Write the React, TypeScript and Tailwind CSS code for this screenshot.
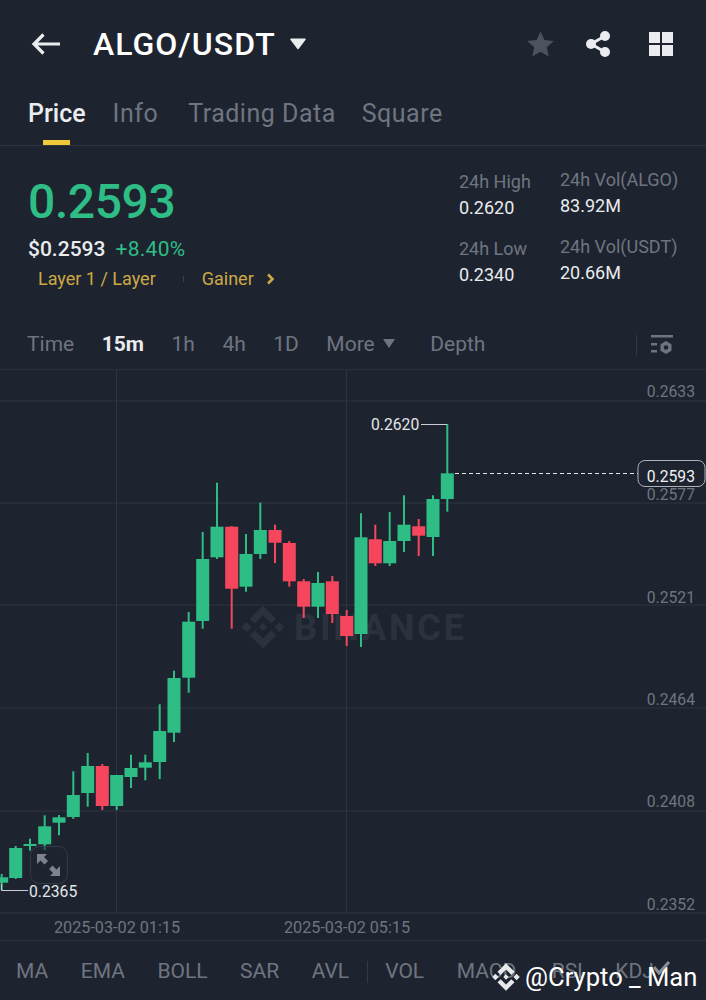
import { ReactNode } from "react";

// [x, wickTop, bodyTop, bodyBottom, wickBottom, red?]
const candles: [number, number, number, number, number, boolean][] = [
  [1.7, 874, 877.3, 882.7, 890, false],
  [15.7, 846, 848, 878, 879, false],
  [30, 838.7, 844, 846, 850.7, false],
  [44.7, 815.3, 826.3, 844.3, 850, false],
  [59, 815, 817.3, 822.7, 835.3, false],
  [73.3, 771.3, 795, 817, 819, false],
  [87.7, 753, 766, 793, 806.7, false],
  [102.3, 764, 766, 806, 810, true],
  [116.7, 775, 775, 806, 810, false],
  [131, 754.7, 768, 777, 788, false],
  [145.3, 754.7, 762.3, 767.7, 780.3, false],
  [159.7, 704.3, 731, 762, 779, false],
  [174, 670.7, 678, 732.7, 742, false],
  [188.7, 612, 621.7, 677.7, 692.7, false],
  [202.7, 532, 559, 621, 628.7, false],
  [217, 482.7, 526.7, 557.3, 559, false],
  [231.7, 526, 526.7, 588.7, 628.7, true],
  [246, 534, 554, 586.7, 591.7, false],
  [260.3, 502.7, 530, 554, 559, false],
  [275, 524.7, 530, 542.7, 563, true],
  [289.3, 541, 543, 581.3, 586.7, true],
  [303.7, 579, 581.3, 606.7, 618, true],
  [318, 572, 583, 606.7, 618, false],
  [332.3, 576, 581.3, 614, 623, true],
  [346.7, 610, 616, 636, 646, true],
  [361, 513.3, 537.3, 634, 647, false],
  [375.3, 524.7, 539.3, 563.3, 566, true],
  [389.7, 512, 541, 563.3, 566, false],
  [404, 495.3, 524.7, 541, 552, false],
  [418.7, 519, 526.3, 535.7, 556, true],
  [433, 495.3, 499, 537, 556, false],
  [447.3, 424, 473.3, 499, 511.7, false],
];

const gridRows = [401, 503, 605, 708, 811, 913];
const axisPrices: [string, number][] = [
  ["0.2633", 397],
  ["0.2577", 500],
  ["0.2521", 603],
  ["0.2464", 705],
  ["0.2408", 807],
  ["0.2352", 910],
];

function BinanceLogo({ className }: { className: string }) {
  return (
    <svg viewBox="0 0 32 32" className={className}>
      <path d="M16 13.5 18.5 16 16 18.5 13.5 16ZM3 16l3-3 3 3-3 3ZM23 16l3-3 3 3-3 3ZM16 3l8 8-3 3-5-5-5 5-3-3ZM16 29l8-8-3-3-5 5-5-5-3 3Z" />
    </svg>
  );
}

function Stat({ label, value }: { label: string; value: string }) {
  return (
    <div className="flex flex-col gap-[4px]">
      <span className="text-[18px] leading-[22px] text-[#6f7580]">{label}</span>
      <span className="text-[18px] leading-[22px] text-[#e9ebee]">{value}</span>
    </div>
  );
}

function Timeframe({ children, active }: { children: ReactNode; active?: boolean }) {
  return <span className={active ? "font-bold text-[#eaecef]" : "text-[#6f7580]"}>{children}</span>;
}

function Chart() {
  return (
    <svg viewBox="0 370 706 570" className="w-full h-[570px] block">
      {gridRows.map((y) => (
        <line key={y} x1="0" x2="706" y1={y} y2={y} stroke="#2f3540" />
      ))}
      <line x1="116.5" x2="116.5" y1="370" y2="913" stroke="#2f3540" />
      <line x1="346.5" x2="346.5" y1="370" y2="913" stroke="#2f3540" />

      {/* watermark */}
      <g fill="#2c323d">
        <svg x="236.500" y="600.500" width="53" height="53" viewBox="0 0 32 32">
          <path d="M16 13.5 18.5 16 16 18.5 13.5 16ZM3 16l3-3 3 3-3 3ZM23 16l3-3 3 3-3 3ZM16 3l8 8-3 3-5-5-5 5-3-3ZM16 29l8-8-3-3-5 5-5-5-3 3Z" />
        </svg>
        <text x="294" y="640" textLength="170" className="text-[36px] font-bold">
          BINANCE
        </text>
      </g>

      {candles.map(([x, top, bodyTop, bodyBottom, bottom, red]) => (
        <g key={x} fill={red ? "#f6465d" : "#2ebd85"}>
          <rect x={x - 1} y={top} width="2" height={bottom - top} />
          <rect x={x - 6.5} y={bodyTop} width="13" height={bodyBottom - bodyTop} />
        </g>
      ))}

      {/* high / low markers */}
      <path d="M421 424.5H447" stroke="#c9ccd1" fill="none" />
      <text x="371" y="430" className="fill-[#e4e6ea] text-[15.7px]">
        0.2620
      </text>
      <path d="M1.5 884V890.5H28" stroke="#c9ccd1" fill="none" />
      <text x="29" y="897" className="fill-[#e4e6ea] text-[15.7px]">
        0.2365
      </text>

      {/* price axis */}
      {axisPrices.map(([p, y]) => (
        <text key={p} x="695" y={y} textAnchor="end" className="fill-[#6f7580] text-[15.7px]">
          {p}
        </text>
      ))}
      <line x1="455" x2="638" y1="473.5" y2="473.5" stroke="#e4e6ea" strokeDasharray="4 3" />
      <rect x="638" y="460.5" width="67" height="26" rx="7" fill="#1e242f" stroke="#aeb2b9" />
      <text x="695" y="482" textAnchor="end" className="fill-[#f0f1f3] text-[15.7px]">
        0.2593
      </text>

      {/* expand button */}
      <rect x="30.5" y="846.5" width="37" height="37" rx="9" fill="#1e242f" fillOpacity="0.55" stroke="#353b46" />
      <g fill="#7d828c">
        <path d="M37 854h10l-3 3 4 4-3.500 3.500-4-4-3.500 3.500Z" />
        <path d="M60 876H50l3-3-4-4 3.500-3.500 4 4 3.500-3.500Z" />
      </g>

      {/* time axis */}
      <text x="54" y="933" className="fill-[#6f7580] text-[16.200px]">
        2025-03-02 01:15
      </text>
      <text x="284" y="933" className="fill-[#6f7580] text-[16.200px]">
        2025-03-02 05:15
      </text>
    </svg>
  );
}

export default function App() {
  return (
    <div className="relative w-[706px] h-[1000px] overflow-hidden bg-[#1e242f] font-[Roboto,sans-serif]">
      {/* Header */}
      <div className="flex items-center h-[88px] pl-[31px] pr-[33px]">
        <svg viewBox="0 0 30 24" className="w-[30px] h-[24px] fill-none stroke-[#eaecef] stroke-[3.2]">
          <path d="M29 12H3M12.5 2.5 3 12l9.5 9.5" />
        </svg>
        <h1 className="ml-[32px] text-[32px] tracking-[1px] font-medium text-white">ALGO/USDT</h1>
        <svg viewBox="0 0 16 12" className="ml-[14px] w-[16px] h-[12px] fill-[#eaecef]">
          <path d="M1 0.5h14a.8.8 0 0 1 .6 1.3L8.6 11a.8.8 0 0 1-1.2 0L.4 1.8A.8.8 0 0 1 1 .5Z" />
        </svg>
        <svg viewBox="0 0 26 26" className="ml-auto w-[27px] h-[27px] fill-[#4d535e]">
          <path d="M13 .5l3.8 8.2 8.9 1-6.6 6 1.8 8.8-7.9-4.5-7.900 4.500 1.800-8.800-6.600-6 8.900-1Z" />
        </svg>
        <svg viewBox="0 0 26 28" className="ml-[31px] w-[26px] h-[28px] fill-[#eaecef] stroke-[#eaecef]">
          <path d="M20 6 6 14l14 8" fill="none" strokeWidth="3" />
          <circle cx="20" cy="6" r="5" stroke="none" />
          <circle cx="6" cy="14" r="5" stroke="none" />
          <circle cx="20" cy="22" r="5" stroke="none" />
        </svg>
        <div className="ml-[38px] grid grid-cols-2 gap-[2px] w-[24px] h-[24px]">
          <div className="bg-[#eaecef]" />
          <div className="bg-[#eaecef]" />
          <div className="bg-[#eaecef]" />
          <div className="bg-[#eaecef]" />
        </div>
      </div>

      {/* Tabs */}
      <div className="flex gap-[27px] h-[58px] pl-[28px] border-b border-[#2f3540] text-[25px] tracking-[0.5px] leading-[52px] text-[#6f7580]">
        <div className="relative font-medium tracking-normal text-[#eaecef]">
          Price
          <div className="absolute left-[15px] bottom-0 w-[27px] h-[5px] bg-[#f0c93a]" />
        </div>
        <span>Info</span>
        <span className="ml-[3px]">Trading Data</span>
        <span className="-ml-[1px]">Square</span>
      </div>

      {/* Price summary */}
      <div className="flex h-[173px]">
        <div className="flex-1 pl-[28px] pt-[28px]">
          <div className="text-[48px] tracking-[-0.4px] leading-[56px] font-medium text-[#2ebd85]">0.2593</div>
          <div className="flex items-baseline gap-[10px] mt-[6px] text-[21px] leading-[26px]">
            <span className="font-medium text-[#eaecef]">$0.2593</span>
            <span className="text-[21px] tracking-[0.3px] text-[#2ebd85]">+8.40%</span>
          </div>
          <div className="flex items-center mt-[4px] pl-[10px] text-[18px] leading-[26px] text-[#cda846]">
            <span>Layer 1 / Layer</span>
            <div className="ml-[27px] w-px h-[6px] bg-[#3a404b]" />
            <span className="ml-[18px]">Gainer</span>
            <svg viewBox="0 0 8 12" className="ml-[12px] w-[9px] h-[12px] fill-none stroke-[#cda846] stroke-[2.6]">
              <path d="M1.5 1.5 6 6l-4.5 4.500" />
            </svg>
          </div>
        </div>
        <div className="flex flex-col gap-[19px] w-[101px] pt-[25px]">
          <Stat label="24h High" value="0.2620" />
          <Stat label="24h Low" value="0.2340" />
        </div>
        <div className="flex flex-col gap-[19px] w-[146px] pt-[23px]">
          <Stat label="24h Vol(ALGO)" value="83.92M" />
          <Stat label="24h Vol(USDT)" value="20.66M" />
        </div>
      </div>

      {/* Timeframes */}
      <div className="flex items-center h-[51px] pt-[2px] pl-[27px] pr-[33px] gap-[27.5px] text-[21px] border-b border-[#2a303a]">
        <Timeframe>Time</Timeframe>
        <Timeframe active>15m</Timeframe>
        <Timeframe>1h</Timeframe>
        <Timeframe>4h</Timeframe>
        <Timeframe>1D</Timeframe>
        <div className="flex items-center gap-[8px]">
          <Timeframe>More</Timeframe>
          <svg viewBox="0 0 12 9" className="w-[12px] h-[9px] mb-[4px] fill-[#6f7580]">
            <path d="M0 0h12L6 9Z" />
          </svg>
        </div>
        <span className="ml-[8px]">
          <Timeframe>Depth</Timeframe>
        </span>
        <div className="ml-auto w-px h-[20px] bg-[#343a45]" />
        <svg viewBox="0 0 22 22" className="-ml-[13px] w-[22px] h-[22px] fill-[#6f7580]">
          <path d="M0 1h22v2.500H0ZM0 9h6v2.500H0ZM0 16h6v2.500H0Z" />
          <path d="M15 7l5.500 3.200v6.600L15 20l-5.500-3.200v-6.600Z" />
          <circle cx="15" cy="13.500" r="2.300" fill="#1e242f" />
        </svg>
      </div>

      {/* Chart */}
      <Chart />

      {/* Indicators */}
      <div className="flex items-center h-[60px] pt-[3px] pl-[16px] gap-[32.5px] border-t border-[#2f3540] text-[21px] text-[#6f7580] whitespace-nowrap overflow-hidden">
        <span>MA</span>
        <span>EMA</span>
        <span>BOLL</span>
        <span>SAR</span>
        <span>AVL</span>
        <div className="-mx-[15px] w-px h-[22px] shrink-0 bg-[#343a45]" />
        <span>VOL</span>
        <span>MACD</span>
        <span className="ml-[3px]">RSI</span>
        <span>KDJ</span>
      </div>

      {/* Repost watermark */}
      <div className="absolute left-[489px] top-[960px] flex items-center gap-[2px] text-[25.6px] leading-[32px] text-white">
        <BinanceLogo className="w-[34px] h-[34px] fill-[#e8e9eb]" />
        <span>@Crypto _ Man</span>
      </div>
      <svg viewBox="0 0 20 14" className="absolute left-[652px] top-[961px] w-[20px] h-[14px] fill-none stroke-[#8a8f99] stroke-[3]">
        <path d="M2 6l5 6L17 1" />
      </svg>
    </div>
  );
}
